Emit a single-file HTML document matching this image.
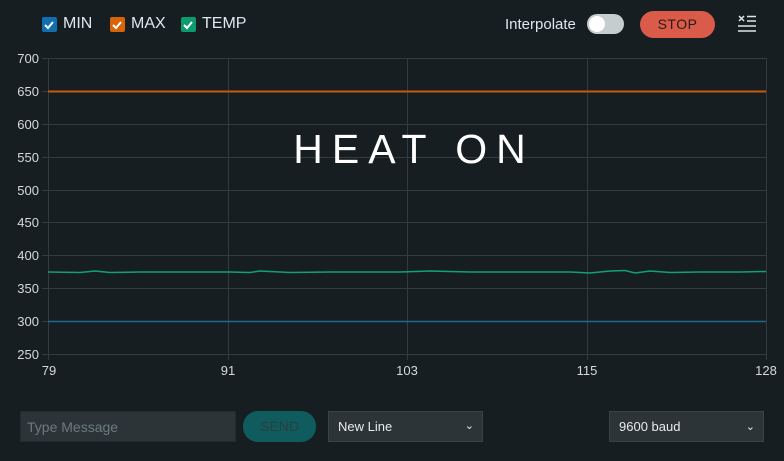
<!DOCTYPE html>
<html><head><style>
body{margin:0;width:784px;height:461px;background:#171e21;font-family:"Liberation Sans",sans-serif;overflow:hidden;position:relative;color:#e0e6e8}
.cb{position:absolute;top:17px;width:15px;height:15px;border-radius:2px}
.lbl{position:absolute;top:15px;font-size:16px;color:#dfe8ee}
</style></head><body>
<div class="cb" style="left:42px;background:#0f6fb0"></div>
<div class="lbl" style="left:63px">MIN</div>
<div class="cb" style="left:110px;background:#d86408"></div>
<div class="lbl" style="left:131px">MAX</div>
<div class="cb" style="left:181px;background:#0d9a6f"></div>
<div class="lbl" style="left:202px">TEMP</div>
<svg style="position:absolute;left:0;top:0" width="784" height="461">
<g stroke="#fff" stroke-width="2" fill="none"><path d="M45 25l3 3 5-6"/><path d="M113 25l3 3 5-6"/><path d="M184 25l3 3 5-6"/></g>
<g stroke="#343b3e" stroke-width="1">
<line x1="48" x2="766" y1="58.5" y2="58.5"/><line x1="48" x2="766" y1="91.5" y2="91.5"/><line x1="48" x2="766" y1="124.5" y2="124.5"/><line x1="48" x2="766" y1="157.5" y2="157.5"/><line x1="48" x2="766" y1="190.5" y2="190.5"/><line x1="48" x2="766" y1="222.5" y2="222.5"/><line x1="48" x2="766" y1="255.5" y2="255.5"/><line x1="48" x2="766" y1="288.5" y2="288.5"/><line x1="48" x2="766" y1="321.5" y2="321.5"/><line x1="48" x2="766" y1="354.5" y2="354.5"/>
<line x1="48.5" x2="48.5" y1="58" y2="360"/><line x1="228.5" x2="228.5" y1="58" y2="360"/><line x1="407.5" x2="407.5" y1="58" y2="360"/><line x1="587.5" x2="587.5" y1="58" y2="360"/><line x1="766.5" x2="766.5" y1="58" y2="360"/>
<line x1="42" x2="48" y1="58.5" y2="58.5"/><line x1="42" x2="48" y1="91.5" y2="91.5"/><line x1="42" x2="48" y1="124.5" y2="124.5"/><line x1="42" x2="48" y1="157.5" y2="157.5"/><line x1="42" x2="48" y1="190.5" y2="190.5"/><line x1="42" x2="48" y1="222.5" y2="222.5"/><line x1="42" x2="48" y1="255.5" y2="255.5"/><line x1="42" x2="48" y1="288.5" y2="288.5"/><line x1="42" x2="48" y1="321.5" y2="321.5"/><line x1="42" x2="48" y1="354.5" y2="354.5"/>
</g>
<line x1="48" x2="766" y1="91.5" y2="91.5" stroke="#c75a0c" stroke-width="2"/>
<line x1="48" x2="766" y1="321.5" y2="321.5" stroke="#1a6a8f" stroke-width="1.5"/>
<polyline fill="none" stroke="#12a077" stroke-width="1.5" points="48,272 80,272.5 95,271 110,272.5 140,272 170,272 200,272 230,272 250,272.5 260,271 290,272.5 330,272 360,272 400,272 430,271 470,272 500,272 540,272 570,272 590,273 610,271 625,270.5 635,273 650,271 670,272.5 700,272 740,272 766,271.5"/>
<g font-size="13" fill="#d4dadc" text-anchor="end" font-family="Liberation Sans,sans-serif">
<text x="39" y="63">700</text><text x="39" y="96">650</text><text x="39" y="129">600</text><text x="39" y="162">550</text><text x="39" y="195">500</text><text x="39" y="227">450</text><text x="39" y="260">400</text><text x="39" y="293">350</text><text x="39" y="326">300</text><text x="39" y="359">250</text>
</g>
<g font-size="13" fill="#d4dadc" text-anchor="middle" font-family="Liberation Sans,sans-serif">
<text x="49" y="375">79</text><text x="228" y="375">91</text><text x="407" y="375">103</text><text x="587" y="375">115</text><text x="766" y="375">128</text>
</g>
<text x="414" y="163" font-size="41" fill="#fff" text-anchor="middle" letter-spacing="9" font-family="Liberation Sans,sans-serif">HEAT ON</text>
<g stroke="#dfe6e8" stroke-width="1.5"><line x1="738" x2="756" y1="26" y2="26"/><line x1="738" x2="756" y1="31" y2="31"/><line x1="747" x2="756" y1="21" y2="21"/><line x1="739" x2="744" y1="16" y2="21"/><line x1="744" x2="739" y1="16" y2="21"/><line x1="747" x2="756" y1="16.5" y2="16.5"/></g>
</svg>
<div style="position:absolute;left:505px;top:16px;font-size:15px;color:#dfe8ee">Interpolate</div>
<div style="position:absolute;left:587px;top:14px;width:37px;height:20px;border-radius:10px;background:#c6cdcf"></div>
<div style="position:absolute;left:589px;top:16px;width:16px;height:16px;border-radius:8px;background:#fff"></div>
<div style="position:absolute;left:640px;top:11px;width:75px;height:27px;border-radius:14px;background:#da5b4a;color:#2a1a18;font-size:14px;text-align:center;line-height:27px;letter-spacing:0.5px">STOP</div>
<div style="position:absolute;left:20px;top:411px;width:216px;height:31px;background:#2c3438;border:1px solid #222a2d;box-sizing:border-box;font-size:14px;color:#6d7a80;line-height:30px;padding-left:6px">Type Message</div>
<div style="position:absolute;left:243px;top:411px;width:73px;height:31px;border-radius:15px;background:#0f5b5e;color:#2a3f42;font-size:14px;text-align:center;line-height:31px">SEND</div>
<div style="position:absolute;left:328px;top:411px;width:155px;height:31px;background:#2c3438;border:1px solid #3a4245;box-sizing:border-box;font-size:13px;color:#e6ecee;line-height:29px;padding-left:9px">New Line<span style="position:absolute;right:8px;font-size:11px">&#8964;</span></div>
<div style="position:absolute;left:609px;top:411px;width:155px;height:31px;background:#2c3438;border:1px solid #3a4245;box-sizing:border-box;font-size:13px;color:#e6ecee;line-height:30px;padding-left:9px">9600 baud<span style="position:absolute;right:8px;font-size:11px">&#8964;</span></div>
</body></html>
